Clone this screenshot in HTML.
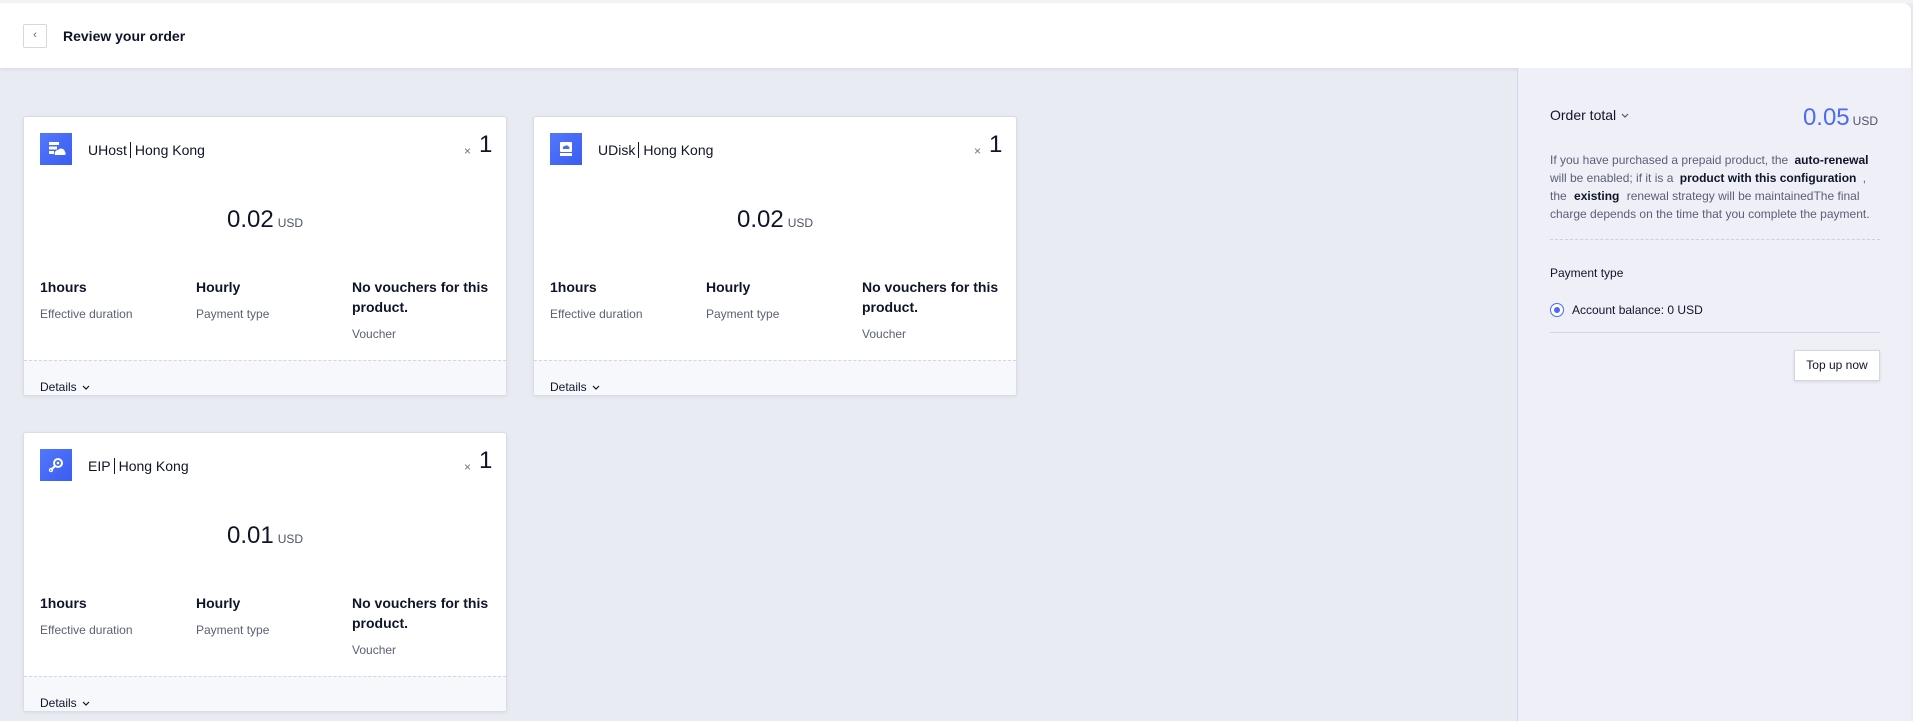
<!DOCTYPE html>
<html><head><meta charset="utf-8"><style>
*{box-sizing:border-box;margin:0;padding:0}
body{width:1913px;height:721px;overflow:hidden;background:#e9ebf3;font-family:"Liberation Sans",Arial,sans-serif;color:#0f1529;position:relative}
.top{position:absolute;left:0;top:0;width:1913px;height:3px;background:#f2f3f5}
.hdr{position:absolute;left:0;top:3px;width:1911px;height:65px;background:#fff;border-top-right-radius:8px;box-shadow:0 2px 4px rgba(0,0,0,.06)}
.back{position:absolute;left:23px;top:21px;width:24px;height:24px;border:1px solid #d3d7e3;border-radius:2px;font-size:11px;color:#666;text-align:center;line-height:21px}
.title{position:absolute;left:63px;top:25px;font-size:14px;font-weight:bold;line-height:16px}
.panel{position:absolute;left:1517px;top:68px;width:394px;height:653px;background:#eeeff7;border-left:1px solid #d3d7e5}
.card{position:absolute;width:484px;height:280px;background:#fff;border:1px solid #d9dcea;border-radius:3px;box-shadow:0 1px 3px rgba(0,0,0,.06);overflow:hidden}
.card .foot{position:absolute;left:0;top:243px;width:100%;height:40px;background:#f7f8fc;border-top:1px dashed #d3d7e5}
.ic{position:absolute;left:16px;top:16px;width:32px;height:32px;background:linear-gradient(135deg,#5378fb,#3a5cf2)}
.ct{position:absolute;left:64px;top:25px;font-size:14px;line-height:16px}
.ct b{display:inline-block;width:1px;height:16px;background:#0f1529;vertical-align:top;margin:0 4px 0 3px}
.x{position:absolute;left:440px;top:27px;font-size:12px;color:#6b7387}
.q{position:absolute;left:455px;top:15px;font-size:24px;line-height:26px}
.pr{position:absolute;left:0;width:100%;top:89px;text-align:center;font-size:24px;line-height:28px}
.pr span{font-size:12px;color:#4b5366;margin-left:4px}
.v{position:absolute;top:160px;font-size:14px;font-weight:bold;line-height:20px;width:150px}
.l{position:absolute;font-size:12px;color:#5a6175;line-height:14px}
.det{position:absolute;left:16px;top:263px;font-size:12px;line-height:14px}
.chev{display:inline-block;vertical-align:middle;margin-left:5px}
</style></head><body>
<div class="top"></div>
<div class="hdr"><div class="back">‹</div><div class="title">Review your order</div></div>

<div class="card" style="left:23px;top:116px">
<div class="ic"><svg width="32" height="32"><g fill="#fff"><rect x="9" y="9" width="10" height="3"/><rect x="9" y="13.5" width="8" height="3"/><rect x="9" y="18" width="5" height="3"/><path d="M15 22a3.5 3.5 0 0 1 3-5 4 4 0 0 1 7 2 2 2 0 0 1 0 3z"/></g></svg></div>
<div class="ct">UHost<b></b>Hong Kong</div><div class="x">×</div><div class="q">1</div>
<div class="pr">0.02<span>USD</span></div>
<div class="v" style="left:16px">1hours</div><div class="l" style="left:16px;top:190px">Effective duration</div>
<div class="v" style="left:172px">Hourly</div><div class="l" style="left:172px;top:190px">Payment type</div>
<div class="v" style="left:328px">No vouchers for this product.</div><div class="l" style="left:328px;top:210px">Voucher</div>
<div class="foot"></div><div class="det">Details<svg class="chev" width="8" height="6"><path d="M1 1l3 3 3-3" fill="none" stroke="#0f1529" stroke-width="1.2"/></svg></div>
</div>

<div class="card" style="left:533px;top:116px">
<div class="ic"><svg width="32" height="32"><g fill="#fff"><rect x="10" y="9" width="12" height="10" rx="1"/><rect x="10" y="20" width="12" height="3"/></g><path d="M13 16a2 2 0 0 1 2-3 2.5 2.5 0 0 1 4 1 1.2 1.2 0 0 1 0 2z" fill="#4a6cf7"/></svg></div>
<div class="ct">UDisk<b></b>Hong Kong</div><div class="x">×</div><div class="q">1</div>
<div class="pr">0.02<span>USD</span></div>
<div class="v" style="left:16px">1hours</div><div class="l" style="left:16px;top:190px">Effective duration</div>
<div class="v" style="left:172px">Hourly</div><div class="l" style="left:172px;top:190px">Payment type</div>
<div class="v" style="left:328px">No vouchers for this product.</div><div class="l" style="left:328px;top:210px">Voucher</div>
<div class="foot"></div><div class="det">Details<svg class="chev" width="8" height="6"><path d="M1 1l3 3 3-3" fill="none" stroke="#0f1529" stroke-width="1.2"/></svg></div>
</div>

<div class="card" style="left:23px;top:432px">
<div class="ic"><svg width="32" height="32"><circle cx="18" cy="14" r="4" fill="none" stroke="#fff" stroke-width="2"/><circle cx="18" cy="14" r="1.3" fill="#fff"/><path d="M15 17l-4 4" stroke="#fff" stroke-width="2"/><circle cx="11" cy="21" r="1.6" fill="none" stroke="#fff" stroke-width="1.2"/></svg></div>
<div class="ct">EIP<b></b>Hong Kong</div><div class="x">×</div><div class="q">1</div>
<div class="pr">0.01<span>USD</span></div>
<div class="v" style="left:16px">1hours</div><div class="l" style="left:16px;top:190px">Effective duration</div>
<div class="v" style="left:172px">Hourly</div><div class="l" style="left:172px;top:190px">Payment type</div>
<div class="v" style="left:328px">No vouchers for this product.</div><div class="l" style="left:328px;top:210px">Voucher</div>
<div class="foot"></div><div class="det">Details<svg class="chev" width="8" height="6"><path d="M1 1l3 3 3-3" fill="none" stroke="#0f1529" stroke-width="1.2"/></svg></div>
</div>

<div class="panel">
<div style="position:absolute;left:32px;top:39px;font-size:14px;line-height:16px">Order total<svg class="chev" width="8" height="6"><path d="M1 1l3 3 3-3" fill="none" stroke="#555" stroke-width="1.2"/></svg></div>
<div style="position:absolute;right:33px;top:37px;font-size:24px;line-height:26px;color:#4b6bf5">0.05<span style="font-size:12px;color:#4b5366;margin-left:3px">USD</span></div>
<div style="position:absolute;left:32px;top:83px;width:330px;font-size:12px;line-height:18px;color:#5a6175">If you have purchased a prepaid product, the <b style="color:#0f1529;padding:0 3px">auto-renewal</b> will be enabled; if it is a <b style="color:#0f1529;padding:0 3px">product with this configuration</b> , the <b style="color:#0f1529;padding:0 4px">existing</b> renewal strategy will be maintainedThe final charge depends on the time that you complete the payment.</div>
<div style="position:absolute;left:32px;top:171px;width:330px;border-top:1px dashed #cdd1de"></div>
<div style="position:absolute;left:32px;top:198px;font-size:12px;line-height:14px">Payment type</div>
<div style="position:absolute;left:32px;top:235px;width:14px;height:14px;border:1px solid #4b6bf5;border-radius:50%;background:#fff"><div style="margin:3px;width:6px;height:6px;border-radius:50%;background:#4b6bf5"></div></div>
<div style="position:absolute;left:54px;top:235px;font-size:12px;line-height:14px">Account balance: 0 USD</div>
<div style="position:absolute;left:32px;top:264px;width:330px;border-top:1px solid #d3d7e3"></div>
<div style="position:absolute;left:276px;top:282px;width:86px;height:31px;background:#fff;border:1px solid #d3d7e3;box-shadow:0 1px 3px rgba(0,0,0,.1);font-size:12px;line-height:29px;text-align:center">Top up now</div>
</div>
</body></html>
